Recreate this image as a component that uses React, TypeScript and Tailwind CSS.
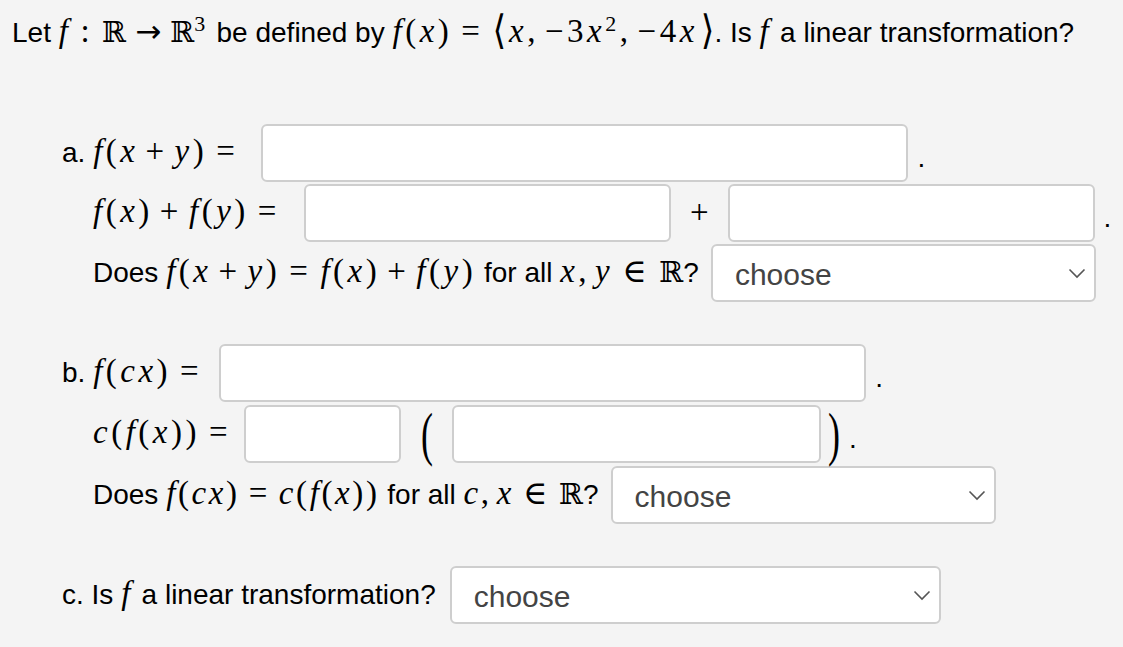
import type { ReactNode } from "react";

// math bits, KaTeX-ish
function M({ children, tight }: { children: ReactNode; tight?: boolean }) {
  return (
    <span
      className={`font-['Liberation_Serif','DejaVu_Serif',serif] text-[33px] leading-none whitespace-nowrap ${
        tight ? "tracking-[2.6px]" : "tracking-[3.5px]"
      }`}
    >
      {children}
    </span>
  );
}

function V({ children }: { children: ReactNode }) {
  return <i className="italic">{children}</i>;
}

function Rel({ children }: { children: ReactNode }) {
  return <span className="mx-[9px]">{children}</span>;
}

function Bin({ children }: { children: ReactNode }) {
  return <span className="mx-[7px]">{children}</span>;
}

function R() {
  return <span className="font-['DejaVu_Serif',serif] text-[29px] tracking-normal">ℝ</span>;
}

function Box({ w }: { w: string }) {
  return (
    <input
      type="text"
      className={`h-[58px] ${w} shrink-0 rounded-[6px] border-2 border-[#cecece] bg-white outline-none`}
    />
  );
}

function Choose({ w }: { w: string }) {
  return (
    <div
      className={`flex h-[58px] ${w} shrink-0 items-center justify-between rounded-[6px] border-2 border-[#cecece] bg-white pl-[22px] pr-[8px] text-[30px] text-[#444]`}
    >
      <span className="mt-[2px]">choose</span>
      <svg width="18" height="11" viewBox="0 0 18 11" fill="none">
        <path d="M1.5 1.5 L9 9 L16.5 1.5" stroke="#555" strokeWidth="1.6" />
      </svg>
    </div>
  );
}

function Dot() {
  return <span className="ml-[9px] mt-[10px]">.</span>;
}

export default function App() {
  return (
    <div className="min-h-screen w-full bg-[#f4f4f4] font-['Liberation_Sans',Arial,sans-serif] text-[28px] text-black">
      <p className="whitespace-nowrap pl-[12px] pt-[4px] leading-[58px]">
        Let{" "}
        <M>
          <V>f</V>
          <Rel>:</Rel>
          <R />
          <Rel>
            <span className="font-['DejaVu_Sans',serif] text-[31px] tracking-normal">→</span>
          </Rel>
          <R />
          <sup className="text-[22px]">3</sup>
        </M>{" "}
        be defined by{" "}
        <M>
          <V>f</V>(<V>x</V>)<Rel>=</Rel>
          <span className="mr-[3px] inline-block scale-y-[1.15] font-['DejaVu_Sans',serif] text-[35px] tracking-normal">⟨</span>
          <V>x</V>,<span className="ml-[6px]">−3</span>
          <V>x</V>
          <sup className="text-[22px]">2</sup>,<span className="ml-[6px]">−4</span>
          <V>x</V>
          <span className="ml-[3px] inline-block scale-y-[1.15] font-['DejaVu_Sans',serif] text-[35px] tracking-normal">⟩</span>
        </M>
        . Is <M><V>f</V></M> a linear transformation?
      </p>

      {/* part a */}
      <div className="mt-[62px] flex flex-col gap-[2px] pl-[62px]">
        <div className="flex h-[58px] items-center">
          <span className="whitespace-nowrap">
            a.{" "}
            <M>
              <V>f</V>(<V>x</V>
              <Bin>+</Bin>
              <V>y</V>)<Rel>=</Rel>
            </M>
          </span>
          <span className="w-[14px]" />
          <Box w="w-[647px]" />
          <Dot />
        </div>
        <div className="flex h-[58px] items-center pl-[31px]">
          <span className="whitespace-nowrap">
            <M>
              <V>f</V>(<V>x</V>)<Bin>+</Bin>
              <V>f</V>(<V>y</V>)<Rel>=</Rel>
            </M>
          </span>
          <span className="w-[15px]" />
          <Box w="w-[367px]" />
          <span className="mx-[19px] font-['Liberation_Serif',serif] text-[33px]">+</span>
          <Box w="w-[367px]" />
          <Dot />
        </div>
        <div className="flex h-[58px] items-center pl-[31px]">
          <span className="whitespace-nowrap">
            Does{" "}
            <M>
              <V>f</V>(<V>x</V>
              <Bin>+</Bin>
              <V>y</V>)<Rel>=</Rel>
              <V>f</V>(<V>x</V>)<Bin>+</Bin>
              <V>f</V>(<V>y</V>)
            </M>{" "}
            for all{" "}
            <M>
              <V>x</V>,<span className="ml-[5px]" />
              <V>y</V>
              <Rel>∈</Rel>
              <R />
            </M>
            ?
          </span>
          <span className="w-[12px]" />
          <Choose w="w-[385px]" />
        </div>
      </div>

      {/* part b */}
      <div className="mt-[42px] flex flex-col gap-[3px] pl-[62px]">
        <div className="flex h-[58px] items-center">
          <span className="whitespace-nowrap">
            b.{" "}
            <M>
              <V>f</V>(<V>cx</V>)<Rel>=</Rel>
            </M>
          </span>
          <span className="w-[8px]" />
          <Box w="w-[647px]" />
          <Dot />
        </div>
        <div className="flex h-[58px] items-center pl-[31px]">
          <span className="whitespace-nowrap">
            <M>
              <V>c</V>(<V>f</V>(<V>x</V>))<Rel>=</Rel>
            </M>
          </span>
          <span className="w-[4px]" />
          <Box w="w-[157px]" />
          <span className="ml-[20px] mr-[19px] inline-block scale-y-[1.65] font-['Liberation_Serif',serif] text-[36px] leading-none">
            (
          </span>
          <Box w="w-[369px]" />
          <span className="ml-[7px] inline-block scale-y-[1.65] font-['Liberation_Serif',serif] text-[36px] leading-none">
            )
          </span>
          <span className="ml-[9px] mt-[10px]">.</span>
        </div>
        <div className="flex h-[58px] items-center pl-[31px]">
          <span className="whitespace-nowrap">
            Does{" "}
            <M tight>
              <V>f</V>(<V>cx</V>)<Rel>=</Rel>
              <V>c</V>(<V>f</V>(<V>x</V>))
            </M>{" "}
            for all{" "}
            <M tight>
              <V>c</V>,<span className="ml-[5px]" />
              <V>x</V>
              <Rel>∈</Rel>
              <R />
            </M>
            ?
          </span>
          <span className="w-[12px]" />
          <Choose w="w-[385px]" />
        </div>
      </div>

      {/* part c */}
      <div className="mt-[42px] pl-[62px]">
        <div className="flex h-[58px] items-center">
          <span className="whitespace-nowrap">
            c. Is <M><V>f</V></M> a linear transformation?
          </span>
          <span className="w-[14px]" />
          <Choose w="w-[491px]" />
        </div>
      </div>
    </div>
  );
}
